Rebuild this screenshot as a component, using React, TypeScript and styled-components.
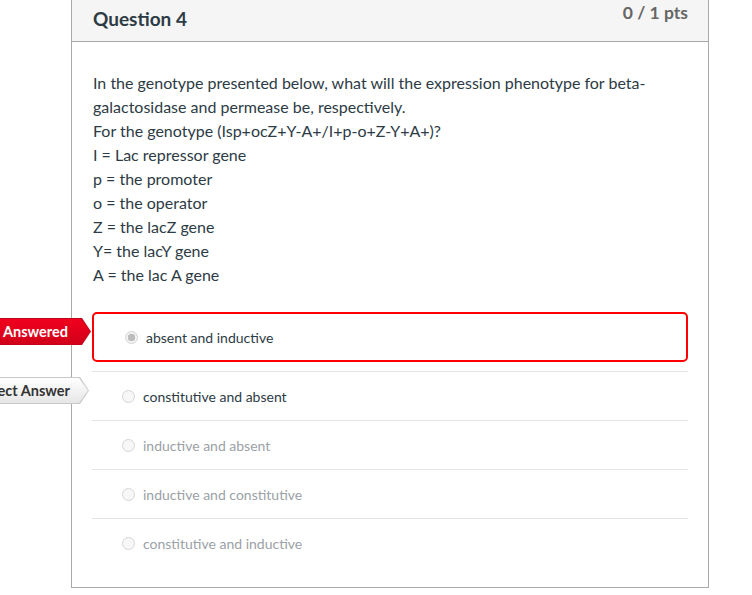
import styled, { createGlobalStyle } from 'styled-components'

const GlobalStyle = createGlobalStyle`
  body {
    margin: 0;
    background: #ffffff;
    font-family: Lato, "Open Sans", sans-serif;
  }
`;

const answers = [
  { id: 1, text: 'absent and inductive', selected: true, tag: 'You Answered', tagKind: 'wrong', dim: false },
  { id: 2, text: 'constitutive and absent', selected: false, tag: 'Correct Answer', tagKind: 'right', dim: false },
  { id: 3, text: 'inductive and absent', selected: false, dim: true },
  { id: 4, text: 'inductive and constitutive', selected: false, dim: true },
  { id: 5, text: 'constitutive and inductive', selected: false, dim: true },
];

const lines = [
  'In the genotype presented below, what will the expression phenotype for beta-',
  'galactosidase and permease be, respectively.',
  'For the genotype (Isp+ocZ+Y-A+/I+p-o+Z-Y+A+)?',
  'I = Lac repressor gene',
  'p = the promoter',
  'o = the operator',
  'Z = the lacZ gene',
  'Y= the lacY gene',
  'A = the lac A gene',
];

const App = () => {
  return (
    <Page>
      <GlobalStyle />
      <Card>
        <Header>
          <Title>Question 4</Title>
          <Points>0 / 1 pts</Points>
        </Header>
        <Body>
          <QuestionText>
            {lines.map((l) => (
              <div key={l}>{l}</div>
            ))}
          </QuestionText>
          <Answers>
            {answers.map((a, i) => (
              <Answer key={a.id} $selected={a.selected} $afterSelected={i === 1}>
                {a.tag && <Tag $kind={a.tagKind as 'wrong' | 'right'}>{a.tag}</Tag>}
                <Radio $checked={a.selected} />
                <AnswerText $dim={a.dim}>{a.text}</AnswerText>
              </Answer>
            ))}
          </Answers>
        </Body>
      </Card>
    </Page>
  )
}

const Page = styled.div`
  width: 752px;
  height: 595px;
  overflow: hidden;
  padding-left: 71px;
  box-sizing: border-box;
`;

const Card = styled.div`
  width: 638px;
  margin-top: -1px;
  border: 1px solid #a9a9a9;
  box-sizing: border-box;
  background: #ffffff;
`;

const Header = styled.div`
  height: 42px;
  display: flex;
  justify-content: space-between;
  align-items: flex-start;
  padding: 0 20px 0 21px;
  background: #f5f5f5;
  border-bottom: 1px solid #a9a9a9;
  box-sizing: border-box;
`;

const Title = styled.h2`
  margin: 8px 0 0;
  font-size: 19px;
  font-weight: 700;
  color: #2d3b45;
  line-height: 22px;
`;

const Points = styled.div`
  margin-top: 3px;
  font-size: 17.5px;
  font-weight: 700;
  color: #666666;
  line-height: 20px;
`;

const Body = styled.div`
  padding: 29px 20px 20px 20px;
`;

const QuestionText = styled.div`
  font-size: 16px;
  line-height: 24px;
  color: #2d3b45;
  padding-left: 1px;
  margin-bottom: 25px;
`;

const Answers = styled.div`
  display: flex;
  flex-direction: column;
`;

const Answer = styled.div<{ $selected: boolean; $afterSelected: boolean }>`
  position: relative;
  display: flex;
  align-items: center;
  gap: 8px;
  height: ${(p) => (p.$selected ? '50px' : '49px')};
  box-sizing: border-box;
  padding-left: ${(p) => (p.$selected ? '31px' : '30px')};
  border-radius: ${(p) => (p.$selected ? '5px' : '0')};
  border: ${(p) => (p.$selected ? '2px solid #ff0000' : 'none')};
  border-top: ${(p) => (p.$selected ? '2px solid #ff0000' : '1px solid #e2e4e6')};
  margin-top: ${(p) => (p.$afterSelected ? '9px' : '0')};
`;

const Tag = styled.div<{ $kind: 'wrong' | 'right' }>`
  position: absolute;
  right: calc(100% + 3px);
  top: ${(p) => (p.$kind === 'wrong' ? '4px' : '5px')};
  height: 27px;
  padding: ${(p) => (p.$kind === 'wrong' ? '0 23px 0 30px' : '0 19px 0 30px')};
  display: flex;
  align-items: center;
  white-space: nowrap;
  font-size: 14.5px;
  font-weight: 700;
  color: ${(p) => (p.$kind === 'wrong' ? '#ffffff' : '#333333')};
  background: ${(p) => (p.$kind === 'wrong' ? '#c4001a' : '#c9c9c9')};
  clip-path: polygon(0 0, calc(100% - 9px) 0, 100% 50%, calc(100% - 9px) 100%, 0 100%);
  z-index: 1;

  &::before {
    content: '';
    position: absolute;
    inset: 1px;
    z-index: -1;
    background: ${(p) =>
      p.$kind === 'wrong'
        ? 'linear-gradient(#f0001c, #d2001a)'
        : 'linear-gradient(#ffffff, #e6e6e6)'};
    clip-path: polygon(0 0, calc(100% - 9px) 0, 100% 50%, calc(100% - 9px) 100%, 0 100%);
  }
`;

const Radio = styled.span<{ $checked: boolean }>`
  width: 13px;
  height: 13px;
  border-radius: 50%;
  box-sizing: border-box;
  border: 1px solid #d3d6d9;
  background: ${(p) =>
    p.$checked
      ? 'radial-gradient(circle, #bdbdbd 0 3.5px, #f2f2f2 4px)'
      : '#f7f7f7'};
  flex-shrink: 0;
`;

const AnswerText = styled.span<{ $dim: boolean }>`
  font-size: 14px;
  color: ${(p) => (p.$dim ? '#9ba1a6' : '#2d3b45')};
`;

export default App
